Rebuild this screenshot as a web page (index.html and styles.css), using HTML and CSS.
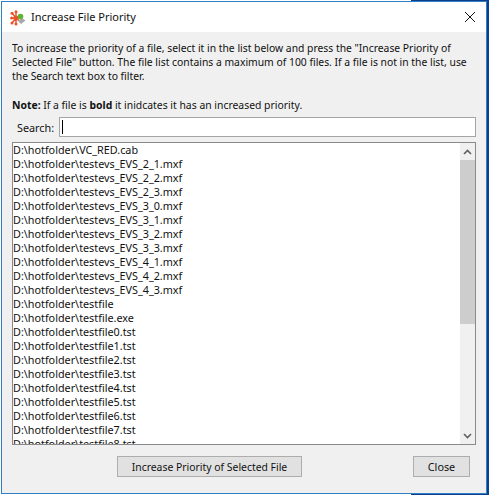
FILE: index.html
```html
<!DOCTYPE html>
<html lang="en">
<head>
<meta charset="utf-8">
<title>Increase File Priority</title>
<link rel="stylesheet" href="styles.css">
</head>
<body>
<div class="window">
  <header class="titlebar">
    <svg class="app-icon" width="16" height="16" viewBox="0 0 16 16">
      <g stroke="#e8532b" stroke-width="1.4"><path d="M6 8 L2 3M6 8 L6 2M6 8 L1.5 8M6 8 L2 13M6 8 L6 14M6 8 L11 12"/></g>
      <g fill="#e8532b"><circle cx="6" cy="8" r="2.6"/><circle cx="2" cy="3.2" r="1.5"/><circle cx="6" cy="1.8" r="1.5"/><circle cx="1.6" cy="8" r="1.5"/><circle cx="2" cy="13" r="1.5"/><circle cx="6" cy="14" r="1.5"/></g>
      <path d="M8 11 L12 8 L15.5 10.5 L11 14Z" fill="#a9a9a9"/>
      <circle cx="10.5" cy="6.5" r="2.8" fill="#5cb531"/>
    </svg>
    <span class="title">Increase File Priority</span>
    <svg class="close-x" width="12" height="12" viewBox="0 0 12 12"><path d="M1 1L11 11M11 1L1 11" stroke="#111" stroke-width="1" fill="none"/></svg>
  </header>
  <main class="content">
    <p class="intro">To increase the priority of a file, select it in the list below and press the "Increase Priority of Selected File" button. The file list contains a maximum of 100 files. If a file is not in the list, use the Search text box to filter.</p>
    <p class="note"><b>Note:</b> If a file is <b>bold</b> it inidcates it has an increased priority.</p>
    <div class="search">
      <label class="search-label">Search:</label>
      <div class="search-box"><span class="caret"></span></div>
    </div>
    <div class="list">
      <ul class="files">
        <li>D:\hotfolder\VC_RED.cab</li>
        <li>D:\hotfolder\testevs_EVS_2_1.mxf</li>
        <li>D:\hotfolder\testevs_EVS_2_2.mxf</li>
        <li>D:\hotfolder\testevs_EVS_2_3.mxf</li>
        <li>D:\hotfolder\testevs_EVS_3_0.mxf</li>
        <li>D:\hotfolder\testevs_EVS_3_1.mxf</li>
        <li>D:\hotfolder\testevs_EVS_3_2.mxf</li>
        <li>D:\hotfolder\testevs_EVS_3_3.mxf</li>
        <li>D:\hotfolder\testevs_EVS_4_1.mxf</li>
        <li>D:\hotfolder\testevs_EVS_4_2.mxf</li>
        <li>D:\hotfolder\testevs_EVS_4_3.mxf</li>
        <li>D:\hotfolder\testfile</li>
        <li>D:\hotfolder\testfile.exe</li>
        <li>D:\hotfolder\testfile0.tst</li>
        <li>D:\hotfolder\testfile1.tst</li>
        <li>D:\hotfolder\testfile2.tst</li>
        <li>D:\hotfolder\testfile3.tst</li>
        <li>D:\hotfolder\testfile4.tst</li>
        <li>D:\hotfolder\testfile5.tst</li>
        <li>D:\hotfolder\testfile6.tst</li>
        <li>D:\hotfolder\testfile7.tst</li>
        <li>D:\hotfolder\testfile8.tst</li>
      </ul>
      <div class="scrollbar">
        <svg class="arrow" width="9" height="6" viewBox="0 0 9 6"><path d="M1 5L4.5 1.5L8 5" fill="none" stroke="#606060" stroke-width="1.6"/></svg>
        <div class="track"><div class="thumb"></div></div>
        <svg class="arrow" width="9" height="6" viewBox="0 0 9 6"><path d="M1 1L4.5 4.5L8 1" fill="none" stroke="#606060" stroke-width="1.6"/></svg>
      </div>
    </div>
    <footer class="actions">
      <button class="btn btn-wide">Increase Priority of Selected File</button>
      <button class="btn btn-close">Close</button>
    </footer>
  </main>
</div>
</body>
</html>
```
FILE: styles.css
```css
* { box-sizing: border-box; }
html, body { margin: 0; padding: 0; }
body { width: 489px; height: 495px; overflow: hidden; font-family: "Noto Sans", sans-serif; font-size: 10.8px; color: #111; background: linear-gradient(to right, #fff 411px, #0b3f8c 411px); }
.window { width: 486px; height: 493px; margin: 1px 0 0 1px; border: 1px solid #2f7fc4; display: flex; flex-direction: column; background: #f0f0f0; }
.titlebar { height: 30px; background: #fff; display: flex; align-items: center; padding: 0 10px 0 8px; flex: none; }
.app-icon { flex: none; margin-top: 1px; }
.title { margin: 0 0 2px 5px; font-size: 11px; flex: 1; }
.close-x { flex: none; }
.content { flex: 1; display: flex; flex-direction: column; padding: 9px 10px 0 10px; min-height: 0; }
.intro { margin: 0; line-height: 14px; font-size: 10.35px; }
.note { margin: 15px 0 0; line-height: 14px; font-size: 10.4px; }
.search { display: flex; align-items: center; margin-top: 5px; height: 20px; }
.search-label { width: 47px; padding-left: 5px; flex: none; }
.search-box { flex: 1; height: 20px; border: 1px solid #a5a5a5; background: #fff; display: flex; align-items: center; padding-left: 2px; }
.caret { width: 1px; height: 14px; background: #000; }
.list { margin-top: 5px; height: 303px; border: 1px solid #8a8a8a; background: #fff; display: flex; overflow: hidden; }
.files { flex: 1; list-style: none; margin: 0; padding: 0; overflow: hidden; min-width: 0; }
.files li { height: 14px; line-height: 13px; white-space: nowrap; }
.scrollbar { width: 15px; flex: none; background: #f0f0f0; display: flex; flex-direction: column; align-items: center; }
.arrow { flex: none; margin: 6px 0 5px; }
.track { flex: 1; width: 100%; }
.thumb { width: 100%; height: 164px; background: #cdcdcd; }
.actions { display: flex; align-items: flex-start; margin-top: 11px; padding-left: 105px; }
.btn { height: 21px; font: inherit; font-size: 10.4px; color: #111; background: #e1e1e1; border: 1px solid #adadad; padding: 0; }
.btn-wide { width: 185px; }
.btn-close { width: 57px; margin-left: 111px; font-size: 10.8px; }
```
